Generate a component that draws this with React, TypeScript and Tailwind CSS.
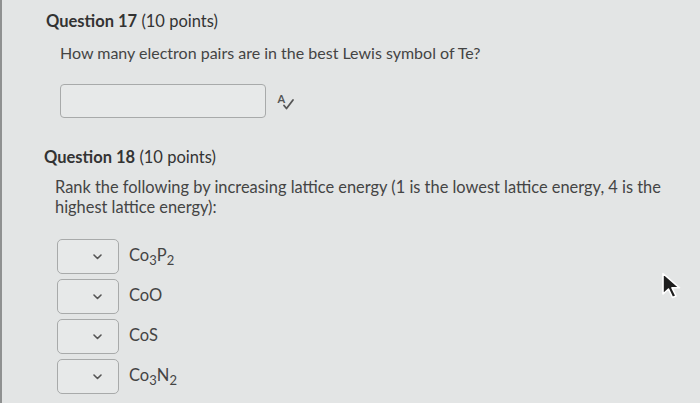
import React from "react";

function Chevron() {
  return (
    <svg width="9" height="6" viewBox="0 0 9 6" fill="none">
      <path d="M1 1l3.5 3.5L8 1" stroke="#555" strokeWidth="1.6" strokeLinecap="round" strokeLinejoin="round" />
    </svg>
  );
}

function SpellIcon() {
  return (
    <svg width="18" height="18" viewBox="0 0 18 18" fill="none">
      <text x="0.5" y="9.5" fontSize="11" fontFamily="Lato, sans-serif" fontWeight="700" fill="#555">A</text>
      <path d="M7 12.5l2.5 3L16 7" stroke="#555" strokeWidth="1.8" strokeLinecap="round" strokeLinejoin="round" />
    </svg>
  );
}

function Sub({ children }: { children: React.ReactNode }) {
  return <span className="relative top-[4px] text-[13px]">{children}</span>;
}

function Row({ children }: { children: React.ReactNode }) {
  return (
    <div className="flex items-start h-[40px]">
      <div className="w-[62px] h-[35px] rounded-[5px] border border-[#a8aaaa] bg-[#e7e9e9] flex items-center justify-end pr-[16px]">
        <Chevron />
      </div>
      <div className="ml-[10px] pt-[5px] text-[16.5px] leading-[22px] text-[#444]">{children}</div>
    </div>
  );
}

export default function App() {
  return (
    <div
      className="relative w-[700px] h-[403px] overflow-hidden bg-[#e3e5e5] border-l-2 border-[#8f9191] text-[#3e3e3e]"
      style={{ fontFamily: "Lato, 'Open Sans', sans-serif" }}
    >
      <div className="pl-[44px] pt-[9px]">
        <div className="text-[16.5px] leading-[24px] text-[#333]">
          <span className="font-bold">Question 17</span> (10 points)
        </div>
        <div className="pl-[14px] mt-[8px] text-[16px] leading-[24px] text-[#444]">
          How many electron pairs are in the best Lewis symbol of Te?
        </div>
        <div className="pl-[14px] mt-[19px] flex items-center">
          <div className="w-[206px] h-[34px] rounded-[4px] border border-[#a8aaaa] bg-[#e7e9e9]" />
          <div className="ml-[11px] mt-[2px]">
            <SpellIcon />
          </div>
        </div>
        <div className="mt-[27px] -ml-[2px] text-[16.5px] leading-[24px] text-[#333]">
          <span className="font-bold">Question 18</span> (10 points)
        </div>
        <div className="pl-[9px] mt-[8px] pr-[20px] text-[16.4px] leading-[20px] text-[#444]">
          Rank the following by increasing lattice energy (1 is the lowest lattice energy, 4 is the highest lattice energy):
        </div>
        <div className="pl-[11px] mt-[22px] flex flex-col">
          <Row>
            Co<Sub>3</Sub>P<Sub>2</Sub>
          </Row>
          <Row>CoO</Row>
          <Row>CoS</Row>
          <Row>
            Co<Sub>3</Sub>N<Sub>2</Sub>
          </Row>
        </div>
      </div>
      <svg className="absolute left-[659px] top-[272px]" width="22" height="28" viewBox="0 0 22 28">
        <path d="M2 1.5 L2 22 L7.5 17 L11.5 25.5 L15 24 L11 15.8 L18.5 15.8 Z" fill="#1e1e1e" stroke="#fff" strokeWidth="1.6" strokeLinejoin="round" />
      </svg>
    </div>
  );
}
